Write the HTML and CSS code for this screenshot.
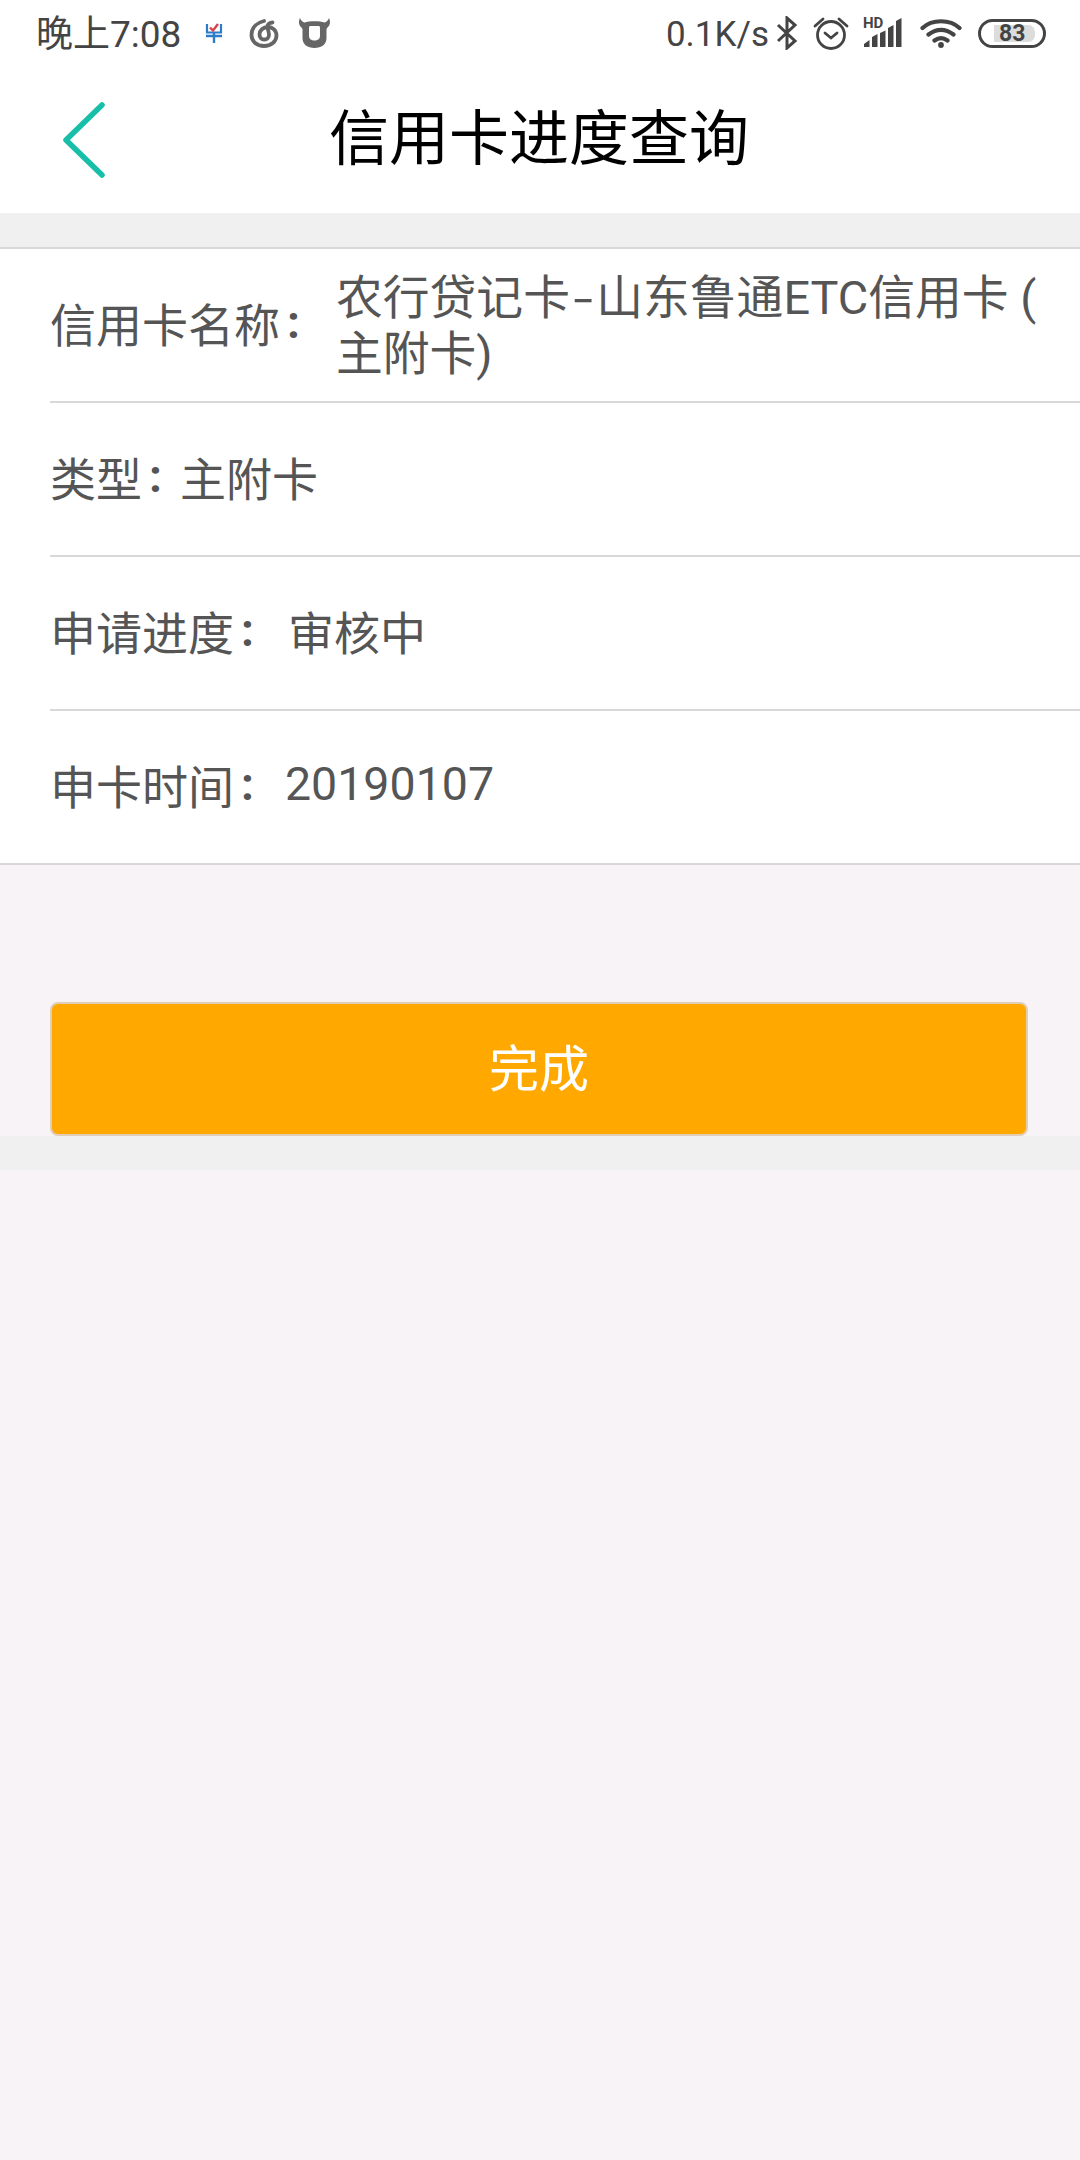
FILE: index.html
```html
<!DOCTYPE html>
<html lang="zh-CN">
<head>
<meta charset="utf-8">
<title>信用卡进度查询</title>
<link rel="stylesheet" href="styles.css">
</head>
<body>
<header class="top">
  <div class="status">
    <div class="status-left">
      <span class="clock">晚上7:08</span>
      <svg class="ic-app" viewBox="0 0 18 20" fill="none"><path d="M2 1v8.500h14V1" stroke="#2b7cc9" stroke-width="2.200"/><path d="M5 4.500l3 3L13 1" stroke="#d8434e" stroke-width="2.400"/><path d="M1 13h16M9 9v11" stroke="#2b7cc9" stroke-width="2.400"/></svg>
      <svg class="ic-music" viewBox="0 0 30 30" fill="none" stroke="#666" stroke-width="3.800" stroke-linecap="round"><path d="M15 3C7 5 2.500 10.500 2.500 17c0 6.500 5.500 11 12.500 11s12.500-4.500 12.500-10.500c0-5-4-8.500-8.500-8.500-5 0-8.500 3.500-8.500 7.500 0 3 2 5 4.700 5 3 0 4.800-2.200 4.800-4.800 0-2.500-1-4.700-1.500-7-.5-2.700 1-5 5-5.200"/></svg>
      <svg class="ic-cow" viewBox="0 0 33 30"><path fill="#666" d="M2 0c1 2.500 2.500 4 4.500 4.500C9 3.700 12.500 3.200 16.500 3.200s7.500.5 10 1.300C28.500 4 30 2.500 31 0c1.500 3 1.500 7-1.500 9.500l-1 1.500v9c0 6.500-5 10-12 10s-12-3.500-12-10v-9l-1-1.500C.500 7 .500 3 2 0z"/><path fill="#fff" d="M12.500 8h8c.8 0 1.500.7 1.500 1.500V18c0 3-2.500 4.500-5.500 4.500S11 21 11 18V9.500C11 8.700 11.700 8 12.500 8z"/></svg>
    </div>
    <div class="status-right">
      <span class="speed">0.1K/s</span>
      <svg class="ic-bt" viewBox="0 0 22 34" fill="none" stroke="#444" stroke-width="3"><path d="M2 9l17 16-8 7V2l8 7L2 25"/></svg>
      <svg class="ic-alarm" viewBox="0 0 36 34" fill="none" stroke="#444" stroke-width="2.800"><circle cx="18" cy="19" r="13.500"/><path d="M12 17l6 5 6-5M2 10l8-7M34 10l-8-7" stroke-linecap="round"/></svg>
      <svg class="ic-signal" viewBox="0 -4 41 34"><text class="hd" x="0" y="11">HD</text><path fill="#444" d="M1 30v-3l5.500-4v7zM9 30V20l5.500-3v13zM17 30V16l5.500-2.500V30zM25 30V11l5.500-3v22zM33 30V4l5.500-3v29z"/></svg>
      <svg class="ic-wifi" viewBox="0 0 42 30" fill="none" stroke="#444" stroke-width="4.200" stroke-linecap="round"><path d="M2.500 10C12 1 30 1 39.500 10M8.500 16.500c8-6 17-6 25 0M14.500 22.500c4-3 9-3 13 0"/><circle cx="21" cy="27" r="2.900" fill="#444" stroke="none"/></svg>
      <div class="battery"><span class="level">83</span></div>
    </div>
  </div>
  <nav class="nav">
    <svg class="back" viewBox="0 0 44 76" fill="none" stroke="#17bfa8" stroke-width="5.500" stroke-linecap="round" stroke-linejoin="round"><path d="M40 3L4 38l36 35"/></svg>
    <h1 class="title">信用卡进度查询</h1>
    <span></span>
  </nav>
</header>
<div class="band band-top"></div>
<main>
  <section class="list">
    <div class="row row-name">
      <span>信用卡名称</span><span class="colon">:</span>
      <span class="value value-name">农行贷记卡<span class="dash">-</span>山东鲁通ETC信用卡 (<br>主附卡)</span>
    </div>
    <div class="row row-type">
      <span>类型</span><span class="colon">:</span>
      <span class="value">主附卡</span>
    </div>
    <div class="row row-progress">
      <span>申请进度</span><span class="colon">:</span>
      <span class="value">审核中</span>
    </div>
    <div class="row row-date">
      <span>申卡时间</span><span class="colon">:</span>
      <span class="value">20190107</span>
    </div>
  </section>
  <div class="actions">
    <button class="done" type="button">完成</button>
  </div>
  <div class="band band-low"></div>
</main>
</body>
</html>
```
FILE: styles.css
```css
* { box-sizing: border-box; }
html, body { margin: 0; padding: 0; }
body {
  width: 1080px;
  height: 2160px;
  background: #f7f3f7;
  font-family: Roboto, "Noto Sans CJK SC", sans-serif;
  overflow: hidden;
}
.top { background: #fff; height: 213px; }
.status {
  height: 66px;
  padding: 0 34px 0 36px;
  display: flex;
  justify-content: space-between;
  align-items: center;
  color: #444;
}
.status-left, .status-right { display: flex; align-items: center; }
.clock { font-size: 37px; line-height: 60px; padding-top: 4px; }
.speed { font-size: 35px; line-height: 60px; padding-top: 4px; }
.ic-app { width: 18px; height: 20px; margin-left: 24px; }
.ic-music { width: 30px; height: 30px; margin-left: 26px; }
.ic-cow { width: 33px; height: 30px; margin-left: 19px; }
.ic-bt { width: 22px; height: 34px; margin-left: 7px; }
.ic-alarm { width: 36px; height: 34px; margin-left: 15px; }
.ic-signal { width: 41px; height: 34px; margin: -5px 0 1px 14px; }
.hd { font-size: 15px; font-weight: 700; fill: #444; font-family: Roboto, sans-serif; }
.ic-wifi { width: 42px; height: 30px; margin-left: 16px; }
.battery {
  width: 68px;
  height: 29px;
  margin-left: 16px;
  border: 3px solid #444;
  border-radius: 15px;
  padding: 3px 8px 3px 13px;
  display: flex;
}
.level {
  flex: 1;
  background: #dcdcdc;
  border-radius: 0 7px 7px 0;
  font-size: 23px;
  font-weight: 700;
  line-height: 17px;
  color: #444;
  padding-left: 5px;
}
.nav {
  height: 147px;
  display: grid;
  grid-template-columns: 1fr auto 1fr;
  align-items: center;
  padding-left: 62px;
}
.back { width: 44px; height: 76px; }
.title { margin: 0; font-size: 60px; font-weight: 400; color: #000; line-height: 80px; transform: translateX(-32px); }
.band { height: 35px; background: #f0f0f0; }
.band-top { height: 34px; }
.list { background: #fff; border-top: 2px solid #d8d8d8; border-bottom: 2px solid #d8d8d8; }
.row {
  margin-left: 50px;
  height: 154px;
  padding-bottom: 6px;
  display: flex;
  align-items: center;
  font-size: 46px;
  color: #555;
  border-bottom: 2px solid #d8d8d8;
  white-space: pre;
}
.row:last-child { border-bottom: 0; height: 152px; }
.colon { font-weight: 700; margin-left: 7px; }
.value-name { font-size: 46.8px; line-height: 56px; margin: 4px 0 0 36px; }
.dash { display: inline-block; font-family: "Noto Sans CJK SC", sans-serif; margin: 0 5px; transform: scaleX(1.4); }
.row-type .value { margin-left: 18px; }
.row-progress .value { margin-left: 34px; }
.row-date .value { margin-left: 31px; font-size: 46.5px; }
.actions { padding: 137px 52px 0 50px; }
.done {
  display: block;
  width: 100%;
  height: 134px;
  border: 2px solid #e0cfb6;
  border-radius: 8px;
  background: #ffa800;
  color: #fff;
  font: inherit;
  font-size: 50px;
  padding: 0 0 8px;
}
.band-low { height: 34px; }
```
